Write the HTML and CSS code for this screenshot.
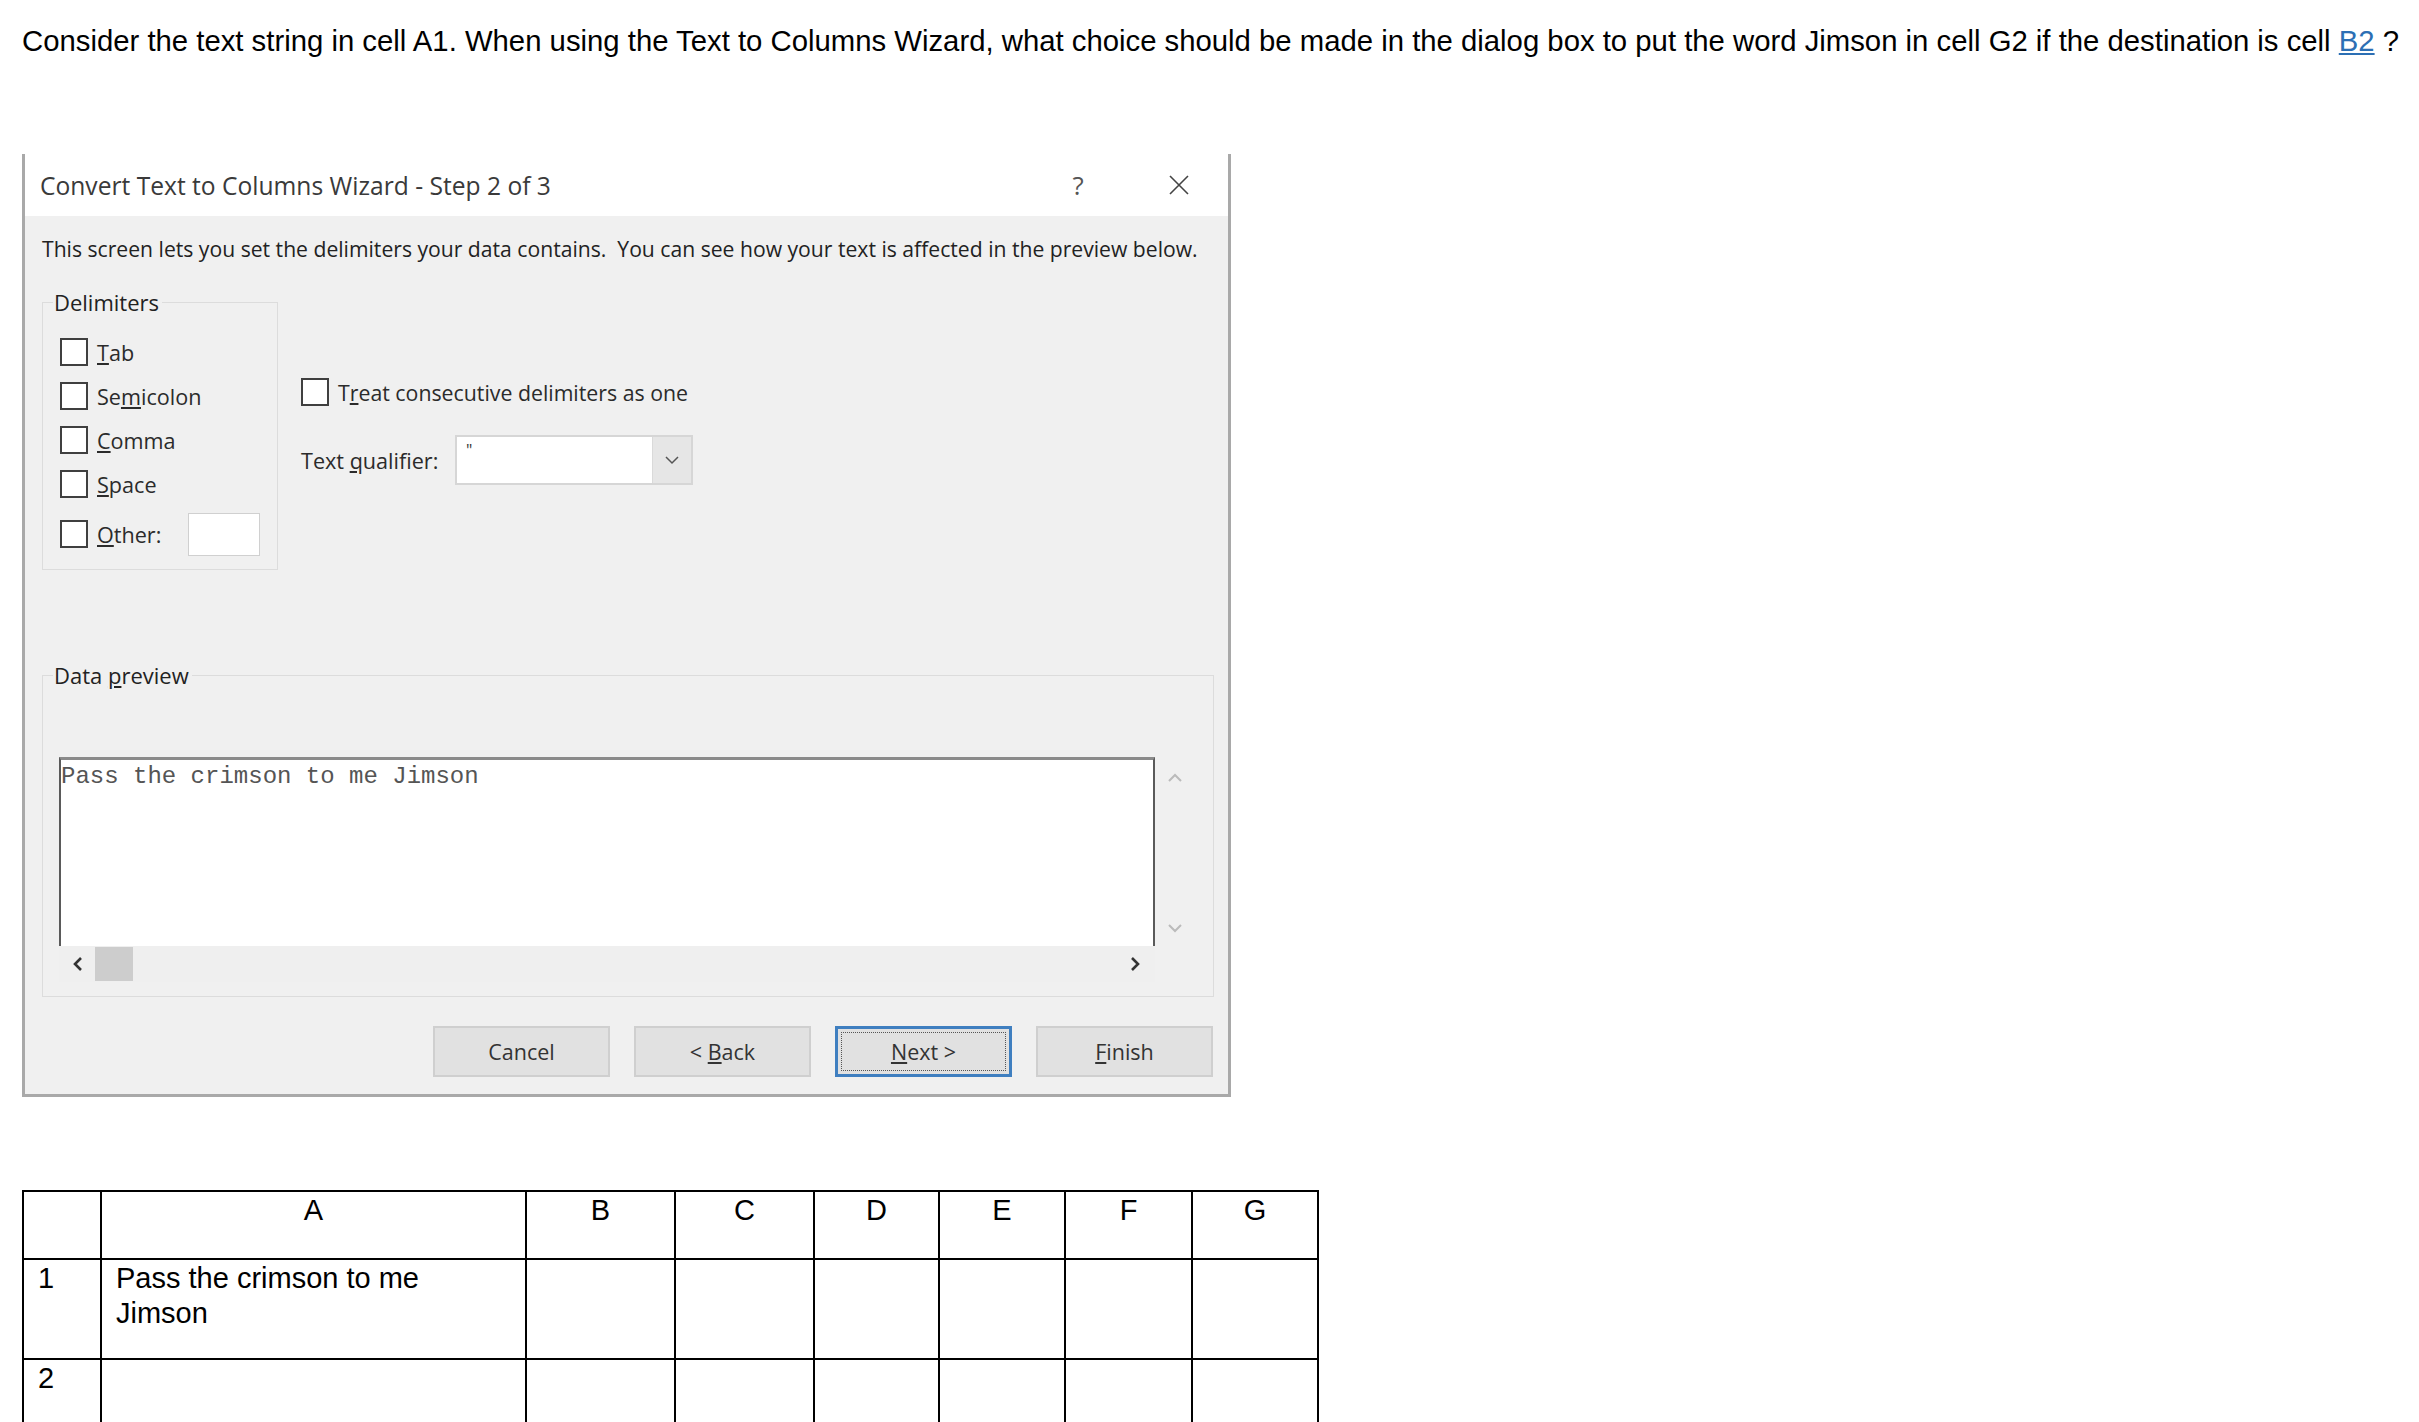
FILE: index.html
```html
<!DOCTYPE html>
<html lang="en">
<head>
<meta charset="utf-8">
<title>Text to Columns question</title>
<link rel="stylesheet" href="styles.css">
</head>
<body>
<div class="page">
  <p class="question">Consider the text string in cell A1. When using the Text to Columns Wizard, what choice should be made in the dialog box to put the word Jimson in cell G2 if the destination is cell <a href="#" class="link">B2</a> ?</p>

  <div class="dialog">
    <div class="titlebar">
      <span class="title">Convert Text to Columns Wizard - Step 2 of 3</span>
      <span class="help">?</span>
      <span class="close">
        <svg width="22" height="22" viewBox="0 0 22 22"><path d="M2 2 L20 20 M20 2 L2 20" stroke="#444" stroke-width="1.6" fill="none"/></svg>
      </span>
    </div>
    <div class="body">
      <p class="desc">This screen lets you set the delimiters your data contains.&nbsp; You can see how your text is affected in the preview below.</p>

      <div class="options">
        <fieldset class="group delims">
          <legend>Delimiters</legend>
          <div class="cb-list">
            <div class="cb-row"><span class="box"></span><span class="lbl"><u>T</u>ab</span></div>
            <div class="cb-row"><span class="box"></span><span class="lbl">Se<u>m</u>icolon</span></div>
            <div class="cb-row"><span class="box"></span><span class="lbl"><u>C</u>omma</span></div>
            <div class="cb-row"><span class="box"></span><span class="lbl"><u>S</u>pace</span></div>
            <div class="cb-row other"><span class="box"></span><span class="lbl"><u>O</u>ther:</span><span class="other-input"></span></div>
          </div>
        </fieldset>
        <div class="side">
          <div class="cb-row treat"><span class="box"></span><span class="lbl">T<u>r</u>eat consecutive delimiters as one</span></div>
          <div class="qual">
            <span class="lbl qlbl">Text <u>q</u>ualifier:</span>
            <div class="combo">
              <span class="combo-val">"</span>
              <span class="combo-btn">
                <svg width="14" height="9" viewBox="0 0 14 9"><path d="M1 1 L7 7 L13 1" stroke="#555" stroke-width="1.5" fill="none"/></svg>
              </span>
            </div>
          </div>
        </div>
      </div>

      <fieldset class="group preview">
        <legend>Data <u>p</u>review</legend>
        <div class="pv">
          <div class="pv-main">
            <div class="pv-box">Pass the crimson to me Jimson</div>
            <div class="hscroll">
              <svg class="harrow left" width="12" height="16" viewBox="0 0 12 16"><path d="M9 2 L3 8 L9 14" stroke="#333" stroke-width="2.6" fill="none"/></svg>
              <span class="thumb"></span>
              <span class="htrack"></span>
              <svg class="harrow right" width="12" height="16" viewBox="0 0 12 16"><path d="M3 2 L9 8 L3 14" stroke="#333" stroke-width="2.6" fill="none"/></svg>
            </div>
          </div>
          <div class="vscroll">
            <svg width="16" height="10" viewBox="0 0 16 10"><path d="M2 8 L8 2 L14 8" stroke="#bbb" stroke-width="2" fill="none"/></svg>
            <svg width="16" height="10" viewBox="0 0 16 10"><path d="M2 2 L8 8 L14 2" stroke="#bbb" stroke-width="2" fill="none"/></svg>
          </div>
        </div>
      </fieldset>

      <div class="buttons">
        <button class="btn"><span>Cancel</span></button>
        <button class="btn"><span>&lt; <u>B</u>ack</span></button>
        <button class="btn default"><span class="focus"><span><u>N</u>ext &gt;</span></span></button>
        <button class="btn"><span><u>F</u>inish</span></button>
      </div>
    </div>
  </div>

  <table class="sheet">
    <colgroup>
      <col class="c-num"><col class="c-a"><col class="c-b"><col class="c-c"><col class="c-d"><col class="c-e"><col class="c-f"><col class="c-g">
    </colgroup>
    <tr class="hdr">
      <td></td><td class="ctr">A</td><td class="ctr">B</td><td class="ctr">C</td><td class="ctr">D</td><td class="ctr">E</td><td class="ctr">F</td><td class="ctr">G</td>
    </tr>
    <tr class="r">
      <td>1</td><td>Pass the crimson to me<br>Jimson</td><td></td><td></td><td></td><td></td><td></td><td></td>
    </tr>
    <tr class="r">
      <td>2</td><td></td><td></td><td></td><td></td><td></td><td></td><td></td>
    </tr>
  </table>
</div>
</body>
</html>
```

FILE: styles.css
```css
html, body {
  margin: 0;
  padding: 0;
  background: #ffffff;
}

body {
  font-family: "Liberation Sans", Arial, sans-serif;
  color: #000;
}

.page {
  padding-left: 22px;
}

.question {
  margin: 24px 0 0;
  font-size: 29.3px;
  line-height: 33px;
  white-space: nowrap;
}

.link {
  color: #2c6fb4;
  text-decoration: underline;
}

/* ---------- dialog ---------- */
.dialog {
  margin-top: 97px;
  width: 1209px;
  box-sizing: border-box;
  border: 3px solid #a9a9a9;
  border-top: none;
  font-family: "Open Sans", "Noto Sans", sans-serif;
  color: #2b2b2b;
}

.titlebar {
  height: 62px;
  background: #ffffff;
  display: flex;
  align-items: center;
  padding: 0 29px 0 15px;
}

.title {
  font-size: 24.6px;
  color: #3a3a3a;
}

.help {
  margin-left: auto;
  width: 40px;
  text-align: center;
  font-size: 26px;
  color: #555;
}

.close {
  margin-left: 61px;
  width: 40px;
  display: flex;
  justify-content: center;
}

.body {
  background: #f0f0f0;
  padding: 18px 14px 17px 17px;
}

.desc {
  margin: 0;
  font-size: 21.15px;
  line-height: 29px;
  color: #222;
  white-space: nowrap;
}

.options {
  display: flex;
  gap: 23px;
  margin-top: 25px;
}

.group {
  margin: 0;
  border: 1px solid #dcdcdc;
  padding: 0 0 0 10px;
  min-width: 0;
}

.group legend {
  padding: 0 3px 0 1px;
  font-size: 22px;
  line-height: 29px;
  color: #222;
}

.delims {
  width: 236px;
  box-sizing: border-box;
  padding-bottom: 7px;
}

.cb-list {
  margin-top: 13px;
  padding-left: 7px;
}

.cb-row {
  display: flex;
  align-items: center;
  height: 44px;
}

.cb-row.other {
  height: 56px;
}

.box {
  width: 24px;
  height: 24px;
  border: 2px solid #3f3f3f;
  background: #ffffff;
  flex: none;
}

.lbl {
  margin-left: 9px;
  font-size: 21.6px;
  color: #2b2b2b;
  white-space: nowrap;
}

.other-input {
  margin-left: 27px;
  width: 70px;
  height: 41px;
  background: #ffffff;
  border: 1px solid #d0d0d0;
  flex: none;
}

.side {
  display: flex;
  flex-direction: column;
}

.cb-row.treat {
  margin-top: 82px;
}

.cb-row.treat .lbl {
  font-size: 21.3px;
}

.qual {
  display: flex;
  align-items: center;
  margin-top: 21px;
}

.qual .qlbl {
  margin-left: 0;
  width: 154px;
  flex: none;
}

.combo {
  width: 238px;
  height: 50px;
  box-sizing: border-box;
  border: 2px solid #d6d6d6;
  background: #ffffff;
  display: flex;
}

.combo-val {
  flex: 1;
  padding: 2px 0 0 9px;
  font-size: 16px;
  color: #333;
}

.combo-btn {
  width: 38px;
  background: #e6e6e6;
  border-left: 1px solid #dadada;
  display: flex;
  align-items: center;
  justify-content: center;
}

.preview {
  margin-top: 91px;
  padding: 0 0 14px 10px;
}

.pv {
  margin-top: 67px;
  margin-left: 6px;
  display: flex;
}

.pv-main {
  width: 1096px;
  display: flex;
  flex-direction: column;
}

.pv-box {
  height: 186px;
  background: #ffffff;
  border: 2px solid #5a5a5a;
  border-top: 3px solid #8a8a8a;
  border-bottom: none;
  font-family: "Liberation Mono", "Courier New", monospace;
  font-size: 24px;
  line-height: 34px;
  color: #555;
  white-space: pre;
}

.hscroll {
  height: 36px;
  display: flex;
  align-items: center;
  background: #efefef;
}

.harrow {
  flex: none;
}

.harrow.left {
  margin: 0 11px 0 13px;
}

.harrow.right {
  margin: 0 14px 0 0;
}

.thumb {
  width: 38px;
  height: 34px;
  background: #cdcdcd;
}

.htrack {
  flex: 1;
}

.vscroll {
  width: 40px;
  height: 192px;
  display: flex;
  flex-direction: column;
  align-items: center;
  justify-content: space-between;
  padding: 16px 0 16px;
  box-sizing: border-box;
}

.buttons {
  display: flex;
  justify-content: flex-end;
  gap: 24px;
  margin-top: 29px;
  padding-right: 1px;
}

.btn {
  width: 177px;
  height: 51px;
  background: #e1e1e1;
  border: 2px solid #cfcfcf;
  font-family: "Open Sans", "Noto Sans", sans-serif;
  font-size: 21.5px;
  color: #333;
  padding: 0;
  display: flex;
  align-items: center;
  justify-content: center;
}

.btn.default {
  border: 3px solid #3f7fc0;
  padding: 3px;
}

.btn .focus {
  width: 100%;
  height: 100%;
  box-sizing: border-box;
  border: 1px dotted #555;
  display: flex;
  align-items: center;
  justify-content: center;
}

/* ---------- sheet ---------- */
.sheet {
  margin-top: 93px;
  border-collapse: collapse;
  table-layout: fixed;
  width: 1295px;
  font-size: 29px;
  line-height: 35px;
}

.sheet td {
  border: 2px solid #000;
  vertical-align: top;
  padding: 1px 14px;
}

.sheet td.ctr {
  text-align: center;
}

.c-num { width: 78px; }
.c-a { width: 425px; }
.c-b { width: 149px; }
.c-c { width: 139px; }
.c-d { width: 125px; }
.c-e { width: 126px; }
.c-f { width: 127px; }
.c-g { width: 126px; }

.hdr td { height: 64px; }
.r td { height: 96px; }
```
